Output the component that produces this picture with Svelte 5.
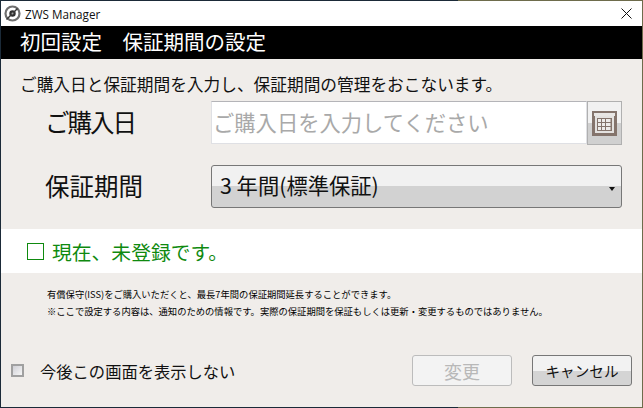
<script>
	let purchaseDate = $state('');
	let hide = $state(false);
	const notes = [
		'有償保守(ISS)をご購入いただくと、最長7年間の保証期間延長することができます。',
		'※ここで設定する内容は、通知のための情報です。実際の保証期間を保証もしくは更新・変更するものではありません。'
	];
</script>

<div class="window">
	<div class="titlebar">
		<svg class="logo" viewBox="0 0 17 17" width="17" height="17">
			<circle cx="8.500" cy="8.500" r="7" fill="none" stroke="#6f6f6f" stroke-width="2.200" />
			<circle cx="8.500" cy="8.500" r="3.200" fill="#2f2f2f" />
			<path d="M2.500 14.500 L13.500 3.500" stroke="#3a3a3a" stroke-width="1.400" />
			<circle cx="8.500" cy="8.500" r="1" fill="#a0a0a0" />
		</svg>
		<span class="app-name">ZWS Manager</span>
		<svg class="close" viewBox="0 0 11 11" width="11" height="11">
			<path d="M0.500 0.500 L10.500 10.500 M10.500 0.500 L0.500 10.500" stroke="#111" stroke-width="1" fill="none" />
		</svg>
	</div>

	<h1 class="banner">初回設定&emsp;保証期間の設定</h1>

	<div class="body">
		<p class="lead">ご購入日と保証期間を入力し、保証期間の管理をおこないます。</p>

		<div class="form">
			<div class="label tight">ご購入日</div>
			<div class="date">
				<input type="text" placeholder="ご購入日を入力してください" bind:value={purchaseDate} />
				<button class="cal" aria-label="カレンダー">
					<svg viewBox="0 0 25 25" width="25" height="25">
						<rect x="0" y="0" width="25" height="25" fill="#84746c" />
						<rect x="2" y="2" width="21" height="3" fill="#e8e6e4" />
						<rect x="3" y="5" width="19" height="17" fill="#e4e2e0" />
						<rect x="5" y="7" width="15" height="13" fill="#84746c" />
						<path d="M6 8h3v3h-3zM10 8h3v3h-3zM14 8h4.500v3h-4.500zM6 12h3v3h-3zM10 12h3v3h-3zM14 12h4.500v3h-4.500zM6 16h3v3h-3zM10 16h3v3h-3zM14 16h4.500v3h-4.500z" fill="#eeecea" />
					</svg>
				</button>
			</div>

			<div class="label">保証期間</div>
			<div class="select">
				<span>3 年間(標準保証)</span>
				<i class="caret"></i>
			</div>
		</div>

		<div class="status">
			<span class="box"></span>
			<span>現在、未登録です。</span>
		</div>

		<div class="notes">
			{#each notes as note}
				<p>{note}</p>
			{/each}
		</div>

		<div class="footer">
			<label class="check">
				<input type="checkbox" bind:checked={hide} />
				<span>今後この画面を表示しない</span>
			</label>
			<div class="actions">
				<button class="btn change" disabled>変更</button>
				<button class="btn">キャンセル</button>
			</div>
		</div>
	</div>
</div>

<style>
	:global(body) {
		margin: 0;
		background: linear-gradient(to right, #1b2a38 458px, #6e6c4c 458px);
	}

	.window {
		width: 641px;
		height: 406px;
		margin: 1px 0 0 1px;
		display: flex;
		flex-direction: column;
		background: #f0edea;
		font-family: "Noto Sans CJK JP", "Noto Sans", sans-serif;
		color: #111;
		overflow: hidden;
	}

	.titlebar {
		height: 25px;
		flex: none;
		display: flex;
		align-items: center;
		padding: 0 10px 0 3px;
		background: #fff;
	}

	.logo {
		margin-right: 4px;
	}

	.app-name {
		font-family: "Open Sans", sans-serif;
		font-size: 11.700px;
		color: #111;
	}

	.close {
		margin-left: auto;
	}

	.banner {
		height: 33px;
		flex: none;
		margin: 0;
		padding-left: 19px;
		background: #000;
		color: #fff;
		font-size: 20.500px;
		font-weight: 400;
		line-height: 31px;
	}

	.body {
		flex: 1;
		display: flex;
		flex-direction: column;
	}

	.lead {
		margin: 15px 0 0 19px;
		font-size: 16.700px;
		line-height: 20px;
		height: 20px;
		white-space: nowrap;
	}

	.form {
		display: grid;
		grid-template-columns: 166px 411px;
		grid-auto-rows: 43px;
		row-gap: 21px;
		margin: 7px 0 0 44px;
		align-items: center;
	}

	.label {
		font-size: 24.500px;
		line-height: 42px;
		height: 43px;
	}

	.tight {
		letter-spacing: -2px;
	}

	.date {
		display: flex;
		height: 43px;
	}

	.date input {
		flex: 1;
		min-width: 0;
		box-sizing: border-box;
		height: 43px;
		margin: 0;
		padding: 0 0 3px 1px;
		border: 1px solid #dfe0e4;
		border-top-color: #b4b4b8;
		border-radius: 0;
		background: #fff;
		font: inherit;
		font-size: 21.300px;
		outline: none;
	}

	.date input::placeholder {
		color: #a9a9a9;
		opacity: 1;
	}

	.cal {
		width: 35px;
		height: 44px;
		flex: none;
		box-sizing: border-box;
		padding: 0;
		display: flex;
		align-items: center;
		justify-content: center;
		border: 1px solid #b0b0b0;
		border-radius: 0;
		background: linear-gradient(#f1f1f1 50%, #d0d0d0 50%);
	}

	.select {
		box-sizing: border-box;
		height: 43px;
		display: flex;
		align-items: center;
		padding: 0 6px 4px 8px;
		border: 1px solid #777;
		border-radius: 3px;
		background: linear-gradient(#f1f1f1 50%, #d2d2d2 50%);
		font-size: 21.300px;
	}

	.caret {
		margin-left: auto;
		margin-top: 8px;
		border: 3px solid transparent;
		border-top: 4px solid #111;
		border-bottom: 0;
	}

	.status {
		display: flex;
		align-items: center;
		gap: 8px;
		height: 44px;
		margin-top: 21px;
		padding-left: 26px;
		background: #fff;
		color: #0f8a0f;
		font-size: 19.800px;
	}

	.box {
		width: 17px;
		height: 17px;
		box-sizing: border-box;
		border: 1px solid #0f8a0f;
	}

	.notes {
		margin: 13px 0 0 46px;
		font-size: 9.300px;
		line-height: 17px;
		color: #000;
	}

	.notes p {
		margin: 0;
		white-space: nowrap;
	}

	.footer {
		display: flex;
		align-items: center;
		justify-content: space-between;
		margin: 35px 10px 0 10px;
	}

	.check {
		display: flex;
		align-items: center;
		gap: 16px;
		font-size: 16.300px;
	}

	.check input {
		appearance: none;
		box-sizing: border-box;
		width: 13px;
		height: 13px;
		margin: 0;
		border: 2px solid #a0a0a0;
		background: linear-gradient(135deg, #d0d0d6, #f6f6f6);
	}

	.actions {
		display: flex;
		gap: 20px;
	}

	.btn {
		width: 100px;
		height: 31px;
		padding: 0;
		border: 1px solid #777;
		border-radius: 3px;
		background: linear-gradient(#f2f2f2 50%, #d4d4d4 50%);
		color: #111;
		font: inherit;
		font-size: 14.600px;
	}

	.btn:disabled {
		border-color: #bcbcbc;
		background: #f3f3f3;
		color: #b8b8b8;
	}

	.change {
		font-size: 18px;
	}
</style>
